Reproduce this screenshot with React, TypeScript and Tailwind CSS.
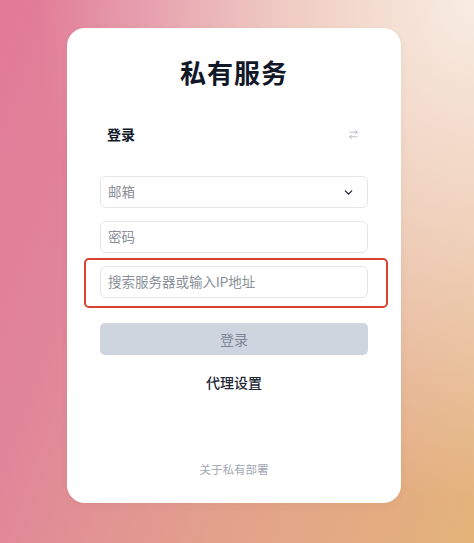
import { ArrowRightLeft, ChevronDown } from "lucide-react";

const FONT = "font-['Inter','Noto_Sans_CJK_SC',sans-serif]";

export default function App() {
  return (
    <div
      className={`${FONT} flex min-h-screen w-full justify-center pr-[6px] pt-[28px] bg-[radial-gradient(ellipse_at_top_right,rgba(248,236,226,1)_0%,rgba(248,236,226,0.6)_30%,rgba(248,236,226,0)_65%),linear-gradient(110deg,#e27a98_0%,#e0859a_25%,#e3a08c_60%,#e3b47a_100%)]`}
    >
      <div className="flex h-[475px] w-[334px] flex-col rounded-[18px] bg-white px-[33px] shadow-[0_2px_10px_rgba(0,0,0,0.04)]">
        <h1 className="mt-[28px] text-center text-[26px] font-bold leading-[36px] tracking-[1px] text-[#111827]">
          私有服务
        </h1>

        <div className="mt-[26px] flex h-[32px] items-center justify-between pl-[7px] pr-[9px]">
          <span className="text-[14px] font-bold text-[#111827]">登录</span>
          <ArrowRightLeft size={11} strokeWidth={1.5} className="text-gray-400" />
        </div>

        <div className="mt-[26px] flex h-[32px] items-center justify-between rounded-[6px] border border-[#e2e5ea] pl-[7px] pr-[12px]">
          <span className="text-[13.5px] text-[#8a8f98]">邮箱</span>
          <ChevronDown size={13} strokeWidth={2.2} className="text-[#111827]" />
        </div>

        <input
          placeholder="密码"
          className="mt-[13px] h-[32px] rounded-[6px] border border-[#e2e5ea] px-[7px] text-[13.5px] outline-none placeholder:text-[#8a8f98]"
        />

        <div className="relative mt-[13px]">
          <input
            placeholder="搜索服务器或输入IP地址"
            className="h-[32px] w-full rounded-[6px] border border-[#e2e5ea] px-[7px] text-[13.5px] outline-none placeholder:text-[#8a8f98]"
          />
          <div className="pointer-events-none absolute -bottom-[10px] -left-[16px] -right-[20px] -top-[8px] rounded-[5px] border-2 border-[#d9432f]" />
        </div>

        <button className="mt-[25px] h-[32px] rounded-[5px] bg-[#cfd5df] text-[14px] text-[#7d8596]">
          登录
        </button>

        <div className="mt-[18px] text-center text-[14px] font-medium leading-[20px] text-[#1f2937]">
          代理设置
        </div>

        <div className="mb-[25px] mt-auto text-center text-[11.5px] leading-[16px] text-[#a3a8b3]">
          关于私有部署
        </div>
      </div>
    </div>
  );
}
